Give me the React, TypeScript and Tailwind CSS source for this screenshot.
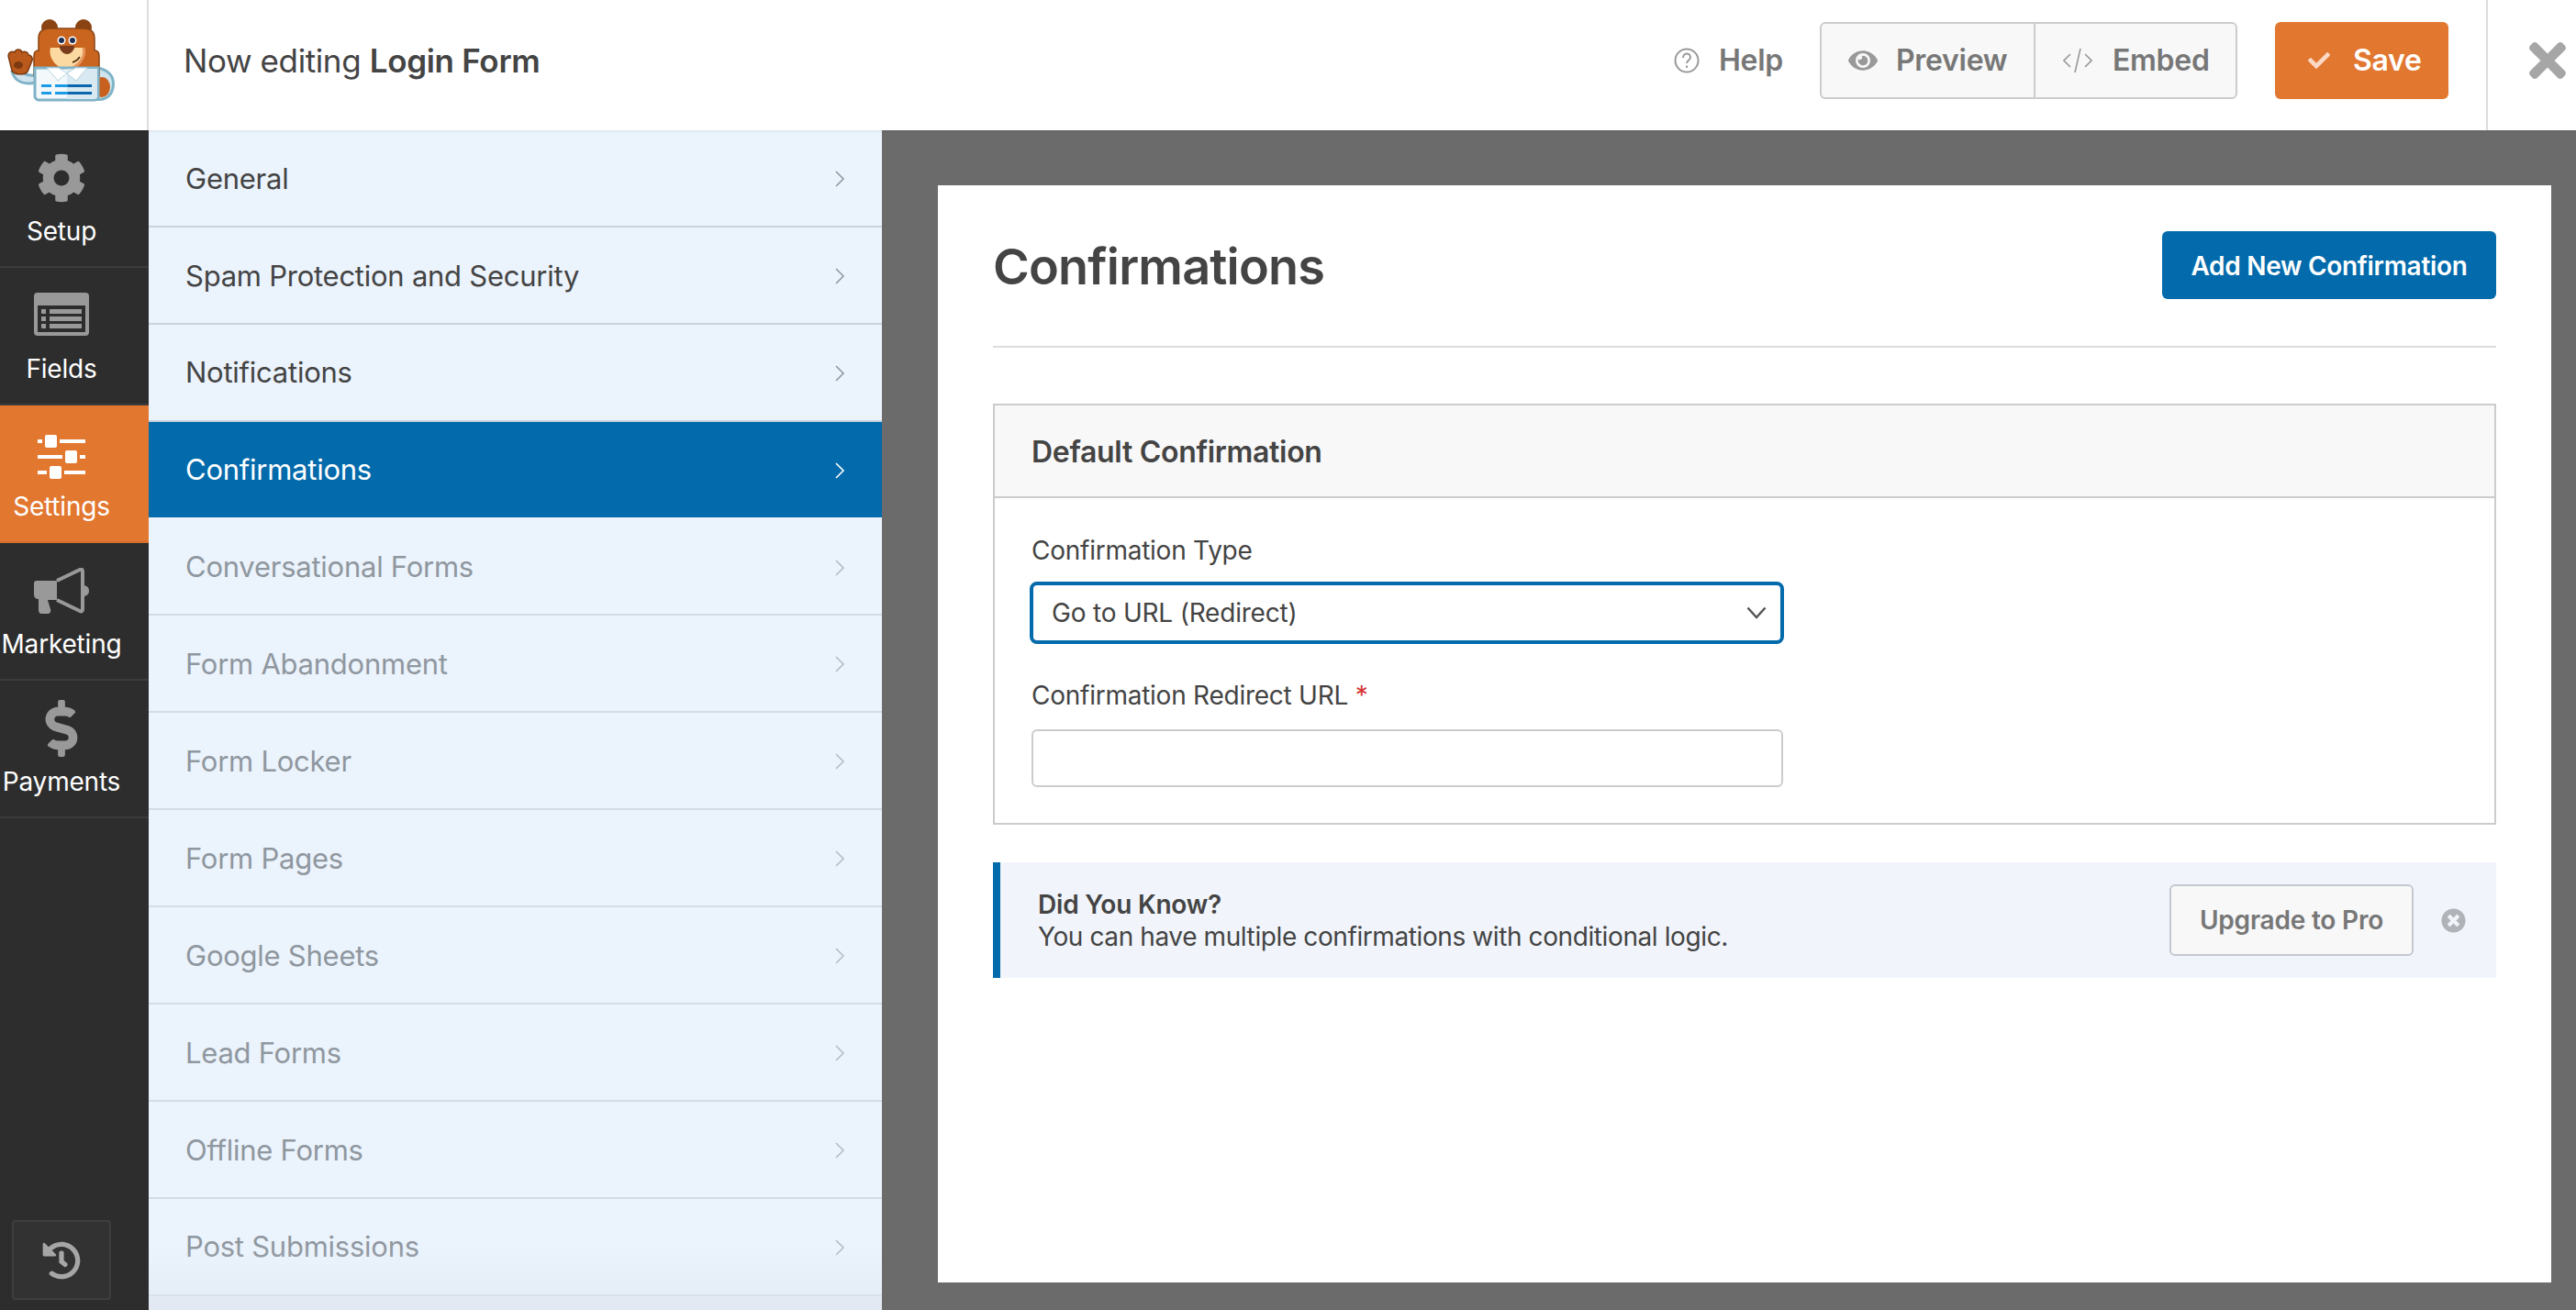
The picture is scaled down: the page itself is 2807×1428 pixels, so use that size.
import { FaCheck, FaCog, FaDollarSign, FaEye, FaHistory, FaTimes, FaTimesCircle } from "react-icons/fa"

const navItems = [
  { label: "General" },
  { label: "Spam Protection and Security" },
  { label: "Notifications" },
  { label: "Confirmations", active: true },
  { label: "Conversational Forms", locked: true },
  { label: "Form Abandonment", locked: true },
  { label: "Form Locker", locked: true },
  { label: "Form Pages", locked: true },
  { label: "Google Sheets", locked: true },
  { label: "Lead Forms", locked: true },
  { label: "Offline Forms", locked: true },
  { label: "Post Submissions", locked: true },
]

function BearLogo() {
  return (
    <svg viewBox="0 0 130 100" className="w-[130px] h-[100px]">
      <g transform="translate(-4,-16)">
        <path d="M108 74c14 3 18 12 16 22s-10 14-20 12" fill="#cfe4ee" stroke="#7fb3c8" strokeWidth="3" />
        <ellipse cx="112" cy="95" rx="9" ry="11" fill="#c8601f" />
        <path d="M14 78c3 10 12 15 26 12v-8c-9 1-15-2-18-8z" fill="#cfe4ee" stroke="#7fb3c8" strokeWidth="3" />
        <path d="M10 61c0-4 4-6 7-4 1-4 7-4 8 0 3-2 7 0 7 3 3 0 5 3 4 6l-5 12c-3 4-14 4-17-1z" fill="#b9591c" stroke="#7d3a10" strokeWidth="1.5" />
        <ellipse cx="21" cy="71" rx="5" ry="4" fill="#7d3a10" />
        <circle cx="55" cy="30" r="9" fill="#8a4312" />
        <circle cx="92" cy="30" r="9" fill="#8a4312" />
        <path d="M43 42c0-8 5-11 12-11h37c7 0 12 3 12 11v13c4 0 5 3 5 6v22H38V61c0-3 1-6 5-6z" fill="#c9651f" stroke="#8a4312" strokeWidth="1.5" />
        <path d="M56 52h36c3 10-6 23-18 23s-21-13-18-23z" fill="#fbd9a0" />
        <path d="M92 52c3 10-6 23-18 23" fill="none" stroke="#e8935c" strokeWidth="3" />
        <circle cx="68" cy="44" r="4.5" fill="#fff" />
        <circle cx="80" cy="44" r="4.5" fill="#fff" />
        <circle cx="68" cy="44" r="3" fill="#1f2f52" />
        <circle cx="80" cy="44" r="3" fill="#1f2f52" />
        <path d="M66 50h16c1 4-4 9-8 9s-9-5-8-9z" fill="#7a3a1c" />
        <path d="M80 68c3-1 6-3 8-6" stroke="#4a2a10" strokeWidth="1.5" fill="none" />
        <path d="M39 74h69v31c0 2-2 4-4 4H43c-2 0-4-2-4-4z" fill="#f3f8fb" stroke="#7fb3c8" strokeWidth="3" />
        <path d="M74 75h33v30c0 2-1 3-3 3H74z" fill="#d9e9f1" />
        <path d="M52 74l13 0 9 6-10 8zM96 74l-13 0-9 6 10 8z" fill="#fff" stroke="#b9d4e0" strokeWidth="1" />
        <rect x="46" y="92" width="11" height="3" fill="#1c9be6" />
        <rect x="46" y="100" width="11" height="3" fill="#1c9be6" />
        <rect x="61" y="92" width="14" height="3" fill="#1c9be6" />
        <rect x="61" y="100" width="14" height="3" fill="#1c9be6" />
        <rect x="75" y="92" width="26" height="3" fill="#0a67ae" />
        <rect x="75" y="100" width="26" height="3" fill="#0a67ae" />
      </g>
    </svg>
  )
}

function FieldsIcon() {
  return (
    <svg viewBox="0 0 60 47" className="w-[60px] h-[47px] -mt-[4px]">
      <rect width="60" height="47" rx="4" fill="#999" />
      <rect x="4" y="14" width="52" height="29" fill="#2d2d2d" />
      <rect x="8" y="18" width="5" height="5" fill="#999" />
      <rect x="8" y="26" width="5" height="5" fill="#999" />
      <rect x="8" y="34" width="5" height="5" fill="#999" />
      <rect x="17" y="18" width="35" height="5" fill="#999" />
      <rect x="17" y="26" width="35" height="5" fill="#999" />
      <rect x="17" y="34" width="35" height="5" fill="#999" />
    </svg>
  )
}

function SlidersIcon() {
  return (
    <svg viewBox="0 0 52 48" className="w-[52px] h-[48px] mt-[8px]" fill="#fff">
      <rect x="0" y="5" width="5" height="4" />
      <rect x="8" y="0" width="13" height="14" rx="2" />
      <rect x="24" y="5" width="28" height="4" />
      <rect x="0" y="22" width="27" height="4" />
      <rect x="30" y="17" width="13" height="14" rx="2" />
      <rect x="46" y="22" width="6" height="4" />
      <rect x="0" y="39" width="10" height="4" />
      <rect x="13" y="34" width="13" height="14" rx="2" />
      <rect x="29" y="39" width="23" height="4" />
    </svg>
  )
}

function MegaphoneIcon() {
  return (
    <svg viewBox="0 0 60 51" className="w-[60px] h-[51px]">
      <path d="M3 14h22v21h-10l3 10c1 3-1 5-3 5H8c-2 0-3-2-3-4V34c-3 0-5-2-5-5V17c0-2 1-3 3-3z" fill="#999" />
      <path d="M25 14L50 2c2-1 3 0 3 2v41c0 2-1 3-3 2L25 35" fill="none" stroke="#999" strokeWidth="4" strokeLinejoin="round" />
      <path d="M53 19c4 0 7 2 7 6s-3 6-7 6z" fill="#999" />
    </svg>
  )
}

function SideItem({ label, icon, active }: { label: string; icon: React.ReactNode; active?: boolean }) {
  return (
    <div className={active ? "h-[150px] bg-[#e27730] pr-[28px] pt-[20px] flex flex-col items-center border-b-2 border-[#d66f2b]" : "h-[150px] pr-[28px] pt-[20px] flex flex-col items-center border-b-2 border-[#3c3c3c]"}>
      <div className="h-[64px] flex items-center justify-center">{icon}</div>
      <span className="mt-[8px] text-[28px] leading-[36px] text-white tracking-[-0.2px]">{label}</span>
    </div>
  )
}

function Chevron({ color }: { color: string }) {
  return (
    <svg viewBox="0 0 12 20" className="w-[12px] h-[20px]" fill="none" stroke={color} strokeWidth="1.6">
      <path d="M2 2l8 8-8 8" />
    </svg>
  )
}

export default function App() {
  return (
    <div className="h-screen w-full flex flex-col overflow-hidden bg-white [font-family:Inter,sans-serif] text-[#444]">
      <header className="h-[142px] flex shrink-0 bg-white shadow-[0_1px_3px_rgba(0,0,0,0.08)] z-10">
        <div className="w-[162px] flex items-center pl-[3px] pb-[10px] border-r-2 border-[#ddd] shrink-0">
          <BearLogo />
        </div>
        <div className="flex-1 flex items-center pb-[10px]">
          <h1 className="ml-[38px] text-[35px] tracking-[-0.4px] text-[#444]">
            Now editing <strong className="font-semibold tracking-[-0.3px]">Login Form</strong>
          </h1>
          <div className="ml-auto flex items-center text-[#777] text-[32px] font-semibold">
            <svg viewBox="0 0 28 28" className="w-[28px] h-[28px]" fill="none" stroke="#999" strokeWidth="2">
              <circle cx="14" cy="14" r="12.5" />
              <path d="M10 11c0-3 2-4.500 4-4.500s4 1.500 4 4c0 3-4 3.500-4 6.500M14 19.500v2.500" />
            </svg>
            <span className="ml-[21px] tracking-[-0.3px]">Help</span>
          </div>
          <div className="ml-[40px] h-[84px] w-[455px] flex rounded-[6px] border-2 border-[#ccc] bg-[#f8f8f8] text-[#777] text-[32px] font-semibold">
            <div className="w-[233px] flex items-center pl-[29px] border-r-2 border-[#ccc]">
              <FaEye className="w-[32px] h-[32px] text-[#999]" />
              <span className="ml-[20px] tracking-[-0.3px]">Preview</span>
            </div>
            <div className="flex-1 flex items-center pl-[30px]">
              <svg viewBox="0 0 32 30" className="w-[32px] h-[30px]" fill="none" stroke="#999" strokeWidth="1.6">
                <path d="M8 8l-7 7 7 7M24 8l7 7-7 7M19 2l-6 26" />
              </svg>
              <span className="ml-[22px] tracking-[-0.3px]">Embed</span>
            </div>
          </div>
          <div className="ml-[41px] h-[84px] w-[189px] flex items-center pl-[34px] rounded-[6px] bg-[#e27730] text-white text-[32px] font-semibold">
            <FaCheck className="w-[28px] h-[24px] text-[#fbd9c4]" />
            <span className="ml-[23px] tracking-[-0.3px]">Save</span>
          </div>
          <div className="w-[41px] shrink-0" />
        </div>
        <div className="w-[98px] shrink-0 flex items-center justify-center pb-[10px] border-l-2 border-[#ddd]">
          <FaTimes className="w-[40px] h-[58px] text-[#a6a6a6] ml-[34px]" />
        </div>
      </header>

      <div className="flex flex-1 min-h-0">
        <aside className="w-[162px] shrink-0 bg-[#2d2d2d] flex flex-col">
          <SideItem label="Setup" icon={<FaCog className="w-[54px] h-[54px] text-[#999]" />} />
          <SideItem label="Fields" icon={<FieldsIcon />} />
          <SideItem label="Settings" icon={<SlidersIcon />} active />
          <SideItem label="Marketing" icon={<MegaphoneIcon />} />
          <SideItem label="Payments" icon={<FaDollarSign className="w-[40px] h-[62px] text-[#999]" />} />
          <div className="mt-auto mb-[11px] ml-[13px] w-[108px] h-[87px] flex items-center justify-center rounded-[4px] border-2 border-[#3e3e3e] bg-[#323232]">
            <FaHistory className="w-[42px] h-[42px] text-[#a6a6a6]" />
          </div>
        </aside>

        <nav className="relative w-[799px] shrink-0 bg-[#e5ecf5] overflow-hidden">
          {navItems.map((item) => (
            <div
              key={item.label}
              className={
                item.active
                  ? "h-[105.9px] flex items-center justify-between pt-[2px] pl-[40px] pr-[40px] bg-[#036aab] border-b-2 border-[#ebf3fc] text-white text-[31px] tracking-[-0.25px]"
                  : item.locked
                    ? "h-[105.9px] flex items-center justify-between pt-[2px] pl-[40px] pr-[40px] bg-[#ebf3fc] border-b-2 border-[#d3dce6] text-[#8f979f] text-[31px] tracking-[-0.25px]"
                    : "h-[105.9px] flex items-center justify-between pt-[2px] pl-[40px] pr-[40px] bg-[#ebf3fc] border-b-2 border-[#c9d3de] text-[#444] text-[31px] tracking-[-0.25px]"
              }
            >
              <span>{item.label}</span>
              <Chevron color={item.active ? "#ffffff" : item.locked ? "#b4bcc5" : "#8f979f"} />
            </div>
          ))}
          <div className="absolute inset-x-0 bottom-0 h-[70px] bg-gradient-to-b from-transparent to-[#dfe6ef]/60" />
        </nav>

        <main className="flex-1 min-w-0 bg-[#6b6b6b] pt-[60px] pl-[61px] pr-[27px] pb-[30px]">
          <div className="h-full bg-white px-[60px] pt-[50px]">
            <div className="h-[127px] flex items-start justify-between border-b-2 border-[#ddd]">
              <h2 className="mt-[11px] text-[54px] leading-[56px] font-semibold tracking-[-0.8px] text-[#444]">Confirmations</h2>
              <button className="w-[364px] h-[74px] pt-[2px] rounded-[6px] bg-[#036aab] text-white text-[28px] font-semibold tracking-[-0.3px]">
                Add New Confirmation
              </button>
            </div>

            <section className="mt-[61px] h-[459px] border-2 border-[#ccc]">
              <div className="h-[101px] flex items-center pl-[40px] pt-[2px] bg-[#f8f8f8] border-b-2 border-[#ccc] text-[32px] font-semibold tracking-[-0.3px]">
                Default Confirmation
              </div>
              <div className="pl-[40px] pt-[39px]">
                <label className="block text-[28px] leading-[36px] tracking-[-0.25px]">Confirmation Type</label>
                <div className="relative mt-[16px] w-[822px] -ml-[2px]">
                  <select
                    defaultValue="redirect"
                    className="w-full h-[68px] pl-[20px] appearance-none rounded-[8px] border-4 border-[#036aab] bg-white text-[28px] tracking-[-0.2px] text-[#444] outline-none"
                  >
                    <option value="redirect">Go to URL (Redirect)</option>
                  </select>
                  <svg viewBox="0 0 22 14" className="absolute right-[19px] top-[27px] w-[22px] h-[14px] pointer-events-none" fill="none" stroke="#555" strokeWidth="2.5">
                    <path d="M1.500 1.500L11 12l9.500-10.500" />
                  </svg>
                </div>
                <label className="block mt-[38px] text-[28px] leading-[36px] tracking-[-0.25px]">
                  Confirmation Redirect URL <span className="text-[#d63638]">*</span>
                </label>
                <input className="mt-[19px] block w-[819px] h-[63px] rounded-[6px] border-2 border-[#ccc] bg-white outline-none" />
              </div>
            </section>

            <div className="mt-[41px] h-[126px] flex items-center border-l-[8px] border-[#036aab] bg-[#f1f5fb] pl-[41px] pr-[33px]">
              <div className="pt-[2px] text-[28px] leading-[35px]">
                <p className="font-semibold tracking-[-0.2px]">Did You Know?</p>
                <p className="tracking-[-0.4px]">You can have multiple confirmations with conditional logic.</p>
              </div>
              <button className="ml-auto w-[266px] h-[78px] rounded-[6px] border-2 border-[#c5c9cf] bg-[#f8f8f8] text-[#777] text-[28px] font-semibold tracking-[-0.2px]">
                Upgrade to Pro
              </button>
              <FaTimesCircle className="ml-[30px] w-[27px] h-[27px] text-[#b0b4b8]" />
            </div>
          </div>
        </main>
      </div>
    </div>
  )
}
